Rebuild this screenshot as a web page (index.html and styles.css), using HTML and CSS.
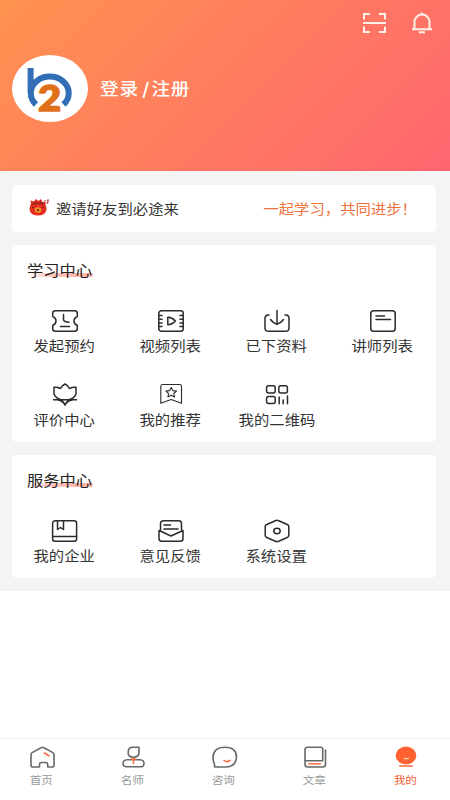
FILE: index.html
```html
<!DOCTYPE html>
<html lang="zh-CN">
<head>
<meta charset="utf-8">
<title>我的</title>
<link rel="stylesheet" href="styles.css">
</head>
<body>
<div class="app">
  <header class="hero">
    <div class="actions">
      <svg width="26" height="24" viewBox="0 0 26 24"><path d="M3 8.500V3h6M18 3h6v5.500M3 15.500V21h6M18 21h6v-5.500M2 12h23"/></svg>
      <svg width="22" height="24" viewBox="0 0 22 24"><path d="M3.500 18v-7a7.500 7.500 0 0 1 15 0v7M1 18.300h20M8 21.300h6M11 3.500V1.500"/></svg>
    </div>
    <div class="profile">
      <svg class="avatar" width="76" height="67" viewBox="0 0 76 67">
        <ellipse cx="38" cy="33.500" rx="38" ry="33.500" fill="#fff"/>
        <path d="M18.600 13V38M24 49.500A19 16.500 0 1 1 51.500 49.500" fill="none" stroke="#316eb5" stroke-width="6"/>
        <text class="mark" transform="translate(26 56) scale(1.080 1)">2</text>
      </svg>
      <div class="login"><span class="wide">登录<i>/</i>注册</span></div>
    </div>
  </header>
  <main class="content">
    <section class="card invite">
      <svg width="22" height="20" viewBox="0 0 22 20">
        <path d="M3 6 2.500 2.500 6 3.500 8 1l2.500 2L13 1l1.500 3 3-.5L17.500 7c2.500 4 1 10.500-7.500 10.500S0 11 3 6Z" fill="#e52d20"/>
        <path d="M3.500 6.500Q10 3.500 16.500 6.500M6 4.500l2-1M12 4l2 .5" stroke="#74251d" fill="none"/>
        <ellipse cx="10" cy="12" rx="3.300" ry="2.800" fill="#ef9a25"/><circle cx="10" cy="12" r="1.300" fill="#ab2018"/>
        <circle cx="4.700" cy="9.500" r=".8" fill="#621"/><circle cx="15" cy="9.500" r=".8" fill="#621"/>
        <path d="M17 3.500V2M19 2.500l1-.5v2l-1 1v1" stroke="#a44" stroke-width="1.200" fill="none"/>
      </svg>
      <span class="wide invite-name">邀请好友到必途来</span>
      <span class="wide slogan">一起学习，共同进步！</span>
    </section>
    <section class="card">
      <h2><span class="wide">学习中心</span></h2>
      <div class="grid">
        <div class="item"><svg class="icon" viewBox="0 0 28 24"><path d="M4.500 1.800h19q2.800 0 2.800 2.500v3.200q-3.300 1.300-3.300 4.500t3.300 4.500v3.200q0 2.500-2.800 2.500h-19q-2.800 0-2.800-2.500v-3.200Q5 15.200 5 12T1.700 7.500V4.300q0-2.500 2.800-2.500ZM12.500 5.500v5q0 2.500 5.500 2.700M9.500 17.600h9"/></svg><span class="wide">发起预约</span></div>
        <div class="item"><svg class="icon" viewBox="0 0 28 24"><rect x="1.800" y="1.800" width="24.400" height="20.500" rx="2.500"/><path d="M2 6.500h3M2 10.200h3M2 13.900h3M2 17.600h3M23 6.500h3M23 10.200h3M23 13.900h3M23 17.600h3M10.800 8.300v7.500q4 .2 7.600-3.700-3.600-4-7.600-3.800Z"/></svg><span class="wide">视频列表</span></div>
        <div class="item"><svg class="icon" viewBox="0 0 28 24"><path d="M6 6H4.500Q2 6.800 2 9v10q0 3.300 3.500 3.300h17q3.500 0 3.500-3.300V9q0-2.200-2.500-3H22M14 1.500V15M7.500 10.500q2.500 3.500 6.500 4.800 4-1.300 6.500-4.800"/></svg><span class="wide">已下资料</span></div>
        <div class="item"><svg class="icon" viewBox="0 0 28 24"><rect x="1.800" y="1.800" width="24.400" height="20.500" rx="2.800"/><path d="M7 7h8.500M7 10.600h14.500"/></svg><span class="wide">讲师列表</span></div>
        <div class="item"><svg class="icon" viewBox="0 0 28 24"><path d="M3 4.300q3.500-.3 6.500 1.200Q11 2.500 14 1q3 1.500 4.500 4.500 3-1.500 6.500-1.200V11q-1.500 4.500-7.500 5.800h-7Q4.500 15.500 3 11ZM2.500 16.800h23M7 17q4.500.7 7 5 2.500-4.300 7-5M10.500 17l3.500 4.500 3.500-4.500"/></svg><span class="wide">评价中心</span></div>
        <div class="item"><svg class="icon thin" viewBox="0 0 28 24"><path d="M5.800 1.500h16.700q2 0 2 1.800v17L14.200 16.500 3.800 20.300v-17q0-1.800 2-1.800ZM14.200 4.500l1.600 3.100 3.700.5-2.700 2.400.7 3.500-3.300-1.700-3.300 1.700.7-3.500-2.700-2.400 3.700-.5Z"/></svg><span class="wide">我的推荐</span></div>
        <div class="item"><svg class="icon" viewBox="0 0 28 24"><rect x="3.600" y="2.700" width="8.600" height="7.200" rx="2"/><rect x="15.800" y="2.700" width="8.600" height="7.200" rx="2"/><rect x="3.600" y="13.400" width="8.600" height="7.200" rx="2"/><path d="M16.200 14v6.700M20.200 17v3.700M24.500 13v7.700"/></svg><span class="wide">我的二维码</span></div>
      </div>
    </section>
    <section class="card">
      <h2><span class="wide">服务中心</span></h2>
      <div class="grid">
        <div class="item"><svg class="icon" viewBox="0 0 28 24"><rect x="1.600" y="1.800" width="24" height="20.500" rx="2.500"/><path d="M2 17.500h23.500M6.500 2v8.500l3-2 3 2V2"/></svg><span class="wide">我的企业</span></div>
        <div class="item"><svg class="icon" viewBox="0 0 28 24"><path d="M3.500 11V4.500q0-2.700 3-2.700h15q3 0 3 2.700V11M7 6h6.500M7 10h14M2 11.500l12 5.500 12-5.500v8.300q0 2.500-3 2.500H5q-3 0-3-2.500Z"/></svg><span class="wide">意见反馈</span></div>
        <div class="item"><svg class="icon" viewBox="0 0 28 24"><path d="M12.300 1.700q1.700-.7 3.400 0l8.500 3.800q1.600.7 1.600 2v9q0 1.300-1.600 2l-8.500 3.800q-1.700.7-3.400 0l-8.500-3.800q-1.600-.7-1.600-2v-9q0-1.300 1.600-2Z"/><ellipse cx="14" cy="12" rx="3.200" ry="2.700"/></svg><span class="wide">系统设置</span></div>
      </div>
    </section>
  </main>
  <nav class="tabs">
    <div class="tab"><svg class="icon" viewBox="0 0 28 24"><path d="M5 22q-2 0-2-1.800V9.500Q3 8.300 4.200 7.600L13 2.700q1.500-.9 3 0l8.800 4.900Q26 8.300 26 9.500v10.700q0 1.800-2 1.800h-4.300v-2.500q0-2-2-2h-4.200q-2 0-2 2V22Z"/><path class="accent" d="m16.500 8 4.500 2.700"/></svg><span class="wide">首页</span></div>
    <div class="tab"><svg class="icon" viewBox="0 0 28 24"><path d="M14 2.200h6V7q0 5.200-5.600 5.200T9.200 7q0-4.800 4.800-4.800ZM8 14.700h13q4 .3 4 3.800t-4 3.300H8q-4 0-4-3.300t4-3.800Z"/><path class="accent" d="M12.500 14h4M14.500 14v4.500"/></svg><span class="wide">名师</span></div>
    <div class="tab"><svg class="icon" viewBox="0 0 28 24"><path d="M4.500 21.500v-2.300Q3 16 3 12.200 3.500 2.300 15 2.300t11.500 9.900Q26 22 15 22H6q-1.500.2-1.500-.5Z"/><path class="accent" d="M14 15.500q3 2.500 6-.2"/></svg><span class="wide">咨询</span></div>
    <div class="tab"><svg class="icon" viewBox="0 0 28 24"><path d="M7 2.300h12.500q2.200 0 2.200 2v11.500H5.500q-1.500.2-1.500 1.200V4.500q0-2.200 3-2.200ZM4 17.500v2q0 2.500 3 2.500h14.500q3 0 3-2.500V5"/><path class="accent" d="M8 18.800h11.500"/></svg><span class="wide">文章</span></div>
    <div class="tab active"><svg class="icon" viewBox="0 0 28 24"><ellipse class="solid" cx="14" cy="10.500" rx="10.300" ry="9"/><path class="smile" d="M12 13.300q2 1 4.500 0"/><path class="accent" d="M7.800 21h12.500"/></svg><span class="wide">我的</span></div>
  </nav>
</div>
</body>
</html>
```

FILE: styles.css
```css
* { box-sizing: border-box; }
body {
  margin: 0;
  background: #fff;
  font-family: "Noto Sans CJK SC", sans-serif;
  color: #333;
}
.app {
  display: flex;
  flex-direction: column;
  width: 450px;
  height: 800px;
  overflow: hidden;
}
.wide {
  display: inline-block;
  white-space: nowrap;
  transform: scaleX(1.13);
}
svg { display: block; flex: none; }

.hero {
  height: 171px;
  padding: 11px 17px 0 12px;
  background: linear-gradient(135deg, #ff924f, #ff6670);
}
.actions {
  display: flex;
  justify-content: flex-end;
  gap: 24px;
}
.actions svg {
  fill: none;
  stroke: #fff1e8;
  stroke-width: 2;
}
.profile {
  display: flex;
  align-items: center;
  gap: 12px;
  margin-top: 20px;
}
.mark {
  font: 900 37px Lato, sans-serif;
  fill: #df711b;
  stroke: #df711b;
  stroke-width: 1.500;
}
.login {
  padding-bottom: 2px;
  color: #fff;
  font-size: 16.500px;
  font-weight: 500;
  letter-spacing: .7px;
}
.login .wide { transform-origin: left; }
.login i { font-style: normal; font-weight: 700; margin: 0 1px 0 3px; }

.content {
  display: flex;
  flex-direction: column;
  gap: 13px;
  height: 420px;
  padding: 14px 14px 0 12px;
  background: #f4f4f4;
}
.card {
  padding: 15px 0 9px;
  background: #fff;
  border-radius: 5px;
}
.invite {
  display: flex;
  align-items: center;
  height: 47px;
  padding: 0 19px 2px 16px;
  font-size: 13.600px;
}
.invite-name {
  margin-left: 6px;
  transform-origin: left;
}
.slogan {
  margin-left: auto;
  color: #ef733f;
  transform-origin: right;
}
h2 {
  display: flex;
  height: 20px;
  margin: 0 0 29px 15px;
  font-size: 14.400px;
  line-height: 20px;
  font-weight: 400;
  color: #222;
}
h2 .wide {
  transform-origin: left;
  background: linear-gradient(90deg, #fff, #ffc4ba 35%, #ffb3a8) 0 13px / 100% 4px no-repeat;
}
.grid {
  display: grid;
  grid-template-columns: repeat(4, 106px);
  row-gap: 24px;
}
.item {
  display: flex;
  flex-direction: column;
  align-items: center;
  height: 50px;
  font-size: 13.600px;
  line-height: 24px;
}
.item .wide { margin-right: 1px; }
.icon {
  width: 28px;
  height: 24px;
  fill: none;
  stroke: #2b2b2b;
  stroke-width: 1.500;
  stroke-linecap: round;
  stroke-linejoin: round;
}
.thin { stroke-width: 1.100; }

.tabs {
  display: flex;
  width: 455px;
  height: 62px;
  margin: auto 0 0 -4px;
  padding-top: 6px;
  border-top: 1px solid #eee;
}
.tab {
  display: flex;
  flex: 1;
  flex-direction: column;
  align-items: center;
  font-size: 10.300px;
  line-height: 22px;
  color: #999;
}
.tab .icon { stroke: #686868; stroke-width: 1.600; }
.tab .accent { stroke: #ff6a3d; }
.tab .solid { fill: #ff6230; stroke: none; }
.tab .smile { stroke: #ffd9b0; stroke-width: 1.200; }
.tab.active { color: #f4623a; }
```
